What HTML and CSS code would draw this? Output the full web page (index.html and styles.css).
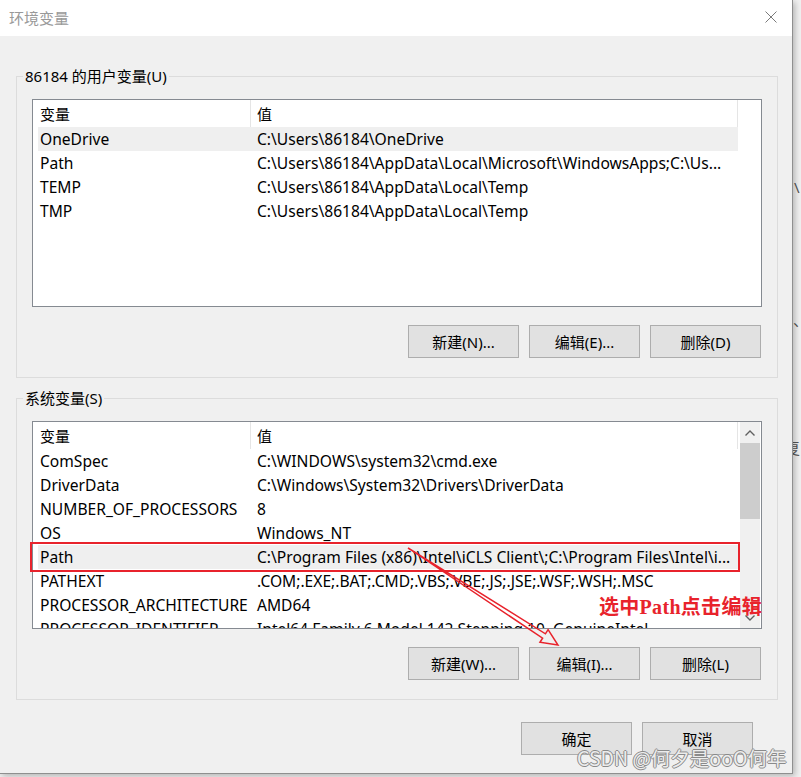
FILE: index.html
```html
<!DOCTYPE html>
<html lang="zh-CN">

<head>
    <meta charset="UTF-8">
    <title>环境变量</title>
    <link rel="stylesheet" href="styles.css">
</head>

<body>
    <div class="desktop">
        <!-- window behind the dialog, only its edges show -->
        <div class="back-window">
            <div class="back-labels">
                <span class="back-label first">\</span>
                <span class="back-label second">系、</span>
                <span class="back-label third">复</span>
            </div>
            <div class="back-buttons">
                <span class="back-btn">确定</span>
                <span class="back-btn">应用(A)</span>
            </div>
        </div>

        <div class="dialog">
            <div class="titlebar">
                <span class="title">环境变量</span>
                <svg class="close" width="12" height="12" viewBox="0 0 12 12">
                    <path d="M0.5 0.5 L11.5 11.5 M11.5 0.5 L0.5 11.5" stroke="#7a7a7a" stroke-width="1" fill="none" />
                </svg>
            </div>

            <div class="dialog-body">
                <fieldset class="group">
                    <legend>86184 的用户变量(U)</legend>
                    <div class="list">
                        <div class="table">
                            <div class="row head"><span>变量</span><span>值</span></div>
                            <div class="row selected"><span>OneDrive</span><span>C:\Users\86184\OneDrive</span></div>
                            <div class="row"><span>Path</span><span>C:\Users\86184\AppData\Local\Microsoft\WindowsApps;C:\Us...</span></div>
                            <div class="row"><span>TEMP</span><span>C:\Users\86184\AppData\Local\Temp</span></div>
                            <div class="row"><span>TMP</span><span>C:\Users\86184\AppData\Local\Temp</span></div>
                        </div>
                    </div>
                    <div class="buttons">
                        <button class="btn">新建(N)...</button>
                        <button class="btn">编辑(E)...</button>
                        <button class="btn">删除(D)</button>
                    </div>
                </fieldset>

                <fieldset class="group system">
                    <legend>系统变量(S)</legend>
                    <div class="list">
                        <div class="table">
                            <div class="row head"><span>变量</span><span>值</span></div>
                            <div class="row"><span>ComSpec</span><span>C:\WINDOWS\system32\cmd.exe</span></div>
                            <div class="row"><span>DriverData</span><span>C:\Windows\System32\Drivers\DriverData</span></div>
                            <div class="row"><span>NUMBER_OF_PROCESSORS</span><span>8</span></div>
                            <div class="row"><span>OS</span><span>Windows_NT</span></div>
                            <div class="row selected"><span>Path</span><span>C:\Program Files (x86)\Intel\iCLS Client\;C:\Program Files\Intel\i...</span></div>
                            <div class="row"><span>PATHEXT</span><span>.COM;.EXE;.BAT;.CMD;.VBS;.VBE;.JS;.JSE;.WSF;.WSH;.MSC</span></div>
                            <div class="row"><span>PROCESSOR_ARCHITECTURE</span><span>AMD64</span></div>
                            <div class="row"><span>PROCESSOR_IDENTIFIER</span><span>Intel64 Family 6 Model 142 Stepping 10, GenuineIntel</span></div>
                        </div>
                        <div class="scrollbar">
                            <div class="sb-arrow">
                                <svg width="10" height="6" viewBox="0 0 10 6"><path d="M0.5 5.5 L5 1 L9.5 5.5" stroke="#606060" stroke-width="1.4" fill="none" /></svg>
                            </div>
                            <div class="sb-thumb"></div>
                            <div class="sb-track"></div>
                            <div class="sb-arrow">
                                <svg width="10" height="6" viewBox="0 0 10 6"><path d="M0.5 0.5 L5 5 L9.5 0.5" stroke="#606060" stroke-width="1.4" fill="none" /></svg>
                            </div>
                        </div>
                    </div>
                    <div class="buttons">
                        <button class="btn">新建(W)...</button>
                        <button class="btn">编辑(I)...</button>
                        <button class="btn">删除(L)</button>
                    </div>
                </fieldset>

                <div class="footer">
                    <button class="btn">确定</button>
                    <button class="btn">取消</button>
                </div>
            </div>

            <!-- red annotations drawn over the screenshot -->
            <div class="mark-box"></div>
            <svg class="arrow" width="793" height="774" viewBox="0 0 793 774">
                <polygon points="0,0 162,-2.6 162,-7.5 178.6,0 162,7.5 162,2.6"
                    transform="translate(408 548) rotate(32.9)"
                    fill="none" stroke="#e8232c" stroke-width="1.5" stroke-linejoin="miter" />
            </svg>
            <div class="note">选中Path点击编辑</div>
            <div class="watermark">CSDN @何夕是ooO何年</div>
        </div>
    </div>
</body>

</html>
```

FILE: styles.css
```css
body {
    margin: 0;
    background: #f0f0f0;
    font-family: "Noto Sans", "Noto Sans CJK SC", sans-serif;
    font-size: 15px;
    color: #000;
}

.desktop {
    position: relative;
    width: 801px;
    height: 777px;
    overflow: hidden;
    background: #f0f0f0;
}

/* Background window */
.back-window {
    position: absolute;
    top: 0;
    left: 0;
    width: 801px;
    height: 777px;
    background: #f0f0f0;
}

.back-labels {
    display: flex;
    flex-direction: column;
    align-items: flex-start;
    color: #555;
    line-height: 20px;
}

.back-label.first {
    margin: 177px 0 0 794px;
}

.back-label.second {
    margin: 113px 0 0 778px;
}

.back-label.third {
    margin: 108px 0 0 785px;
}

.back-buttons {
    display: flex;
    gap: 10px;
    margin: 215px 0 0 39px;
}

.back-btn {
    width: 109px;
    height: 30px;
    line-height: 34px;
    text-align: center;
    background: #e1e1e1;
    border: 1px solid #adadad;
    color: #222;
}

/* Dialog */
.dialog {
    position: absolute;
    top: 0;
    left: 0;
    width: 792px;
    height: 773px;
    background: #f0f0f0;
    border-right: 1px solid #8f8f8f;
    border-bottom: 1px solid #8f8f8f;
    box-shadow: 2px 2px 6px rgba(0, 0, 0, 0.25);
}

.titlebar {
    display: flex;
    align-items: center;
    justify-content: space-between;
    height: 36px;
    padding: 0 15px 0 9px;
    box-sizing: border-box;
    background: #fff;
}

.title {
    color: #999;
    font-size: 15px;
    margin-top: -2px;
}

.close {
    margin-top: -2px;
}

.dialog-body {
    display: flex;
    flex-direction: column;
}

.group {
    width: 762px;
    box-sizing: border-box;
    margin: 30px 0 0 16px;
    padding: 13px 15px 19px;
    border: 1px solid #dcdcdc;
    min-width: 0;
}

.group.system {
    margin-top: 10px;
}

.group legend {
    margin-left: -9px;
    padding: 0 2px;
    line-height: 20px;
    height: 20px;
}

.list {
    display: flex;
    height: 208px;
    box-sizing: border-box;
    border: 1px solid #858a91;
    background: #fff;
    overflow: hidden;
}

.table {
    width: 706px;
    flex: none;
}

.row {
    display: grid;
    grid-template-columns: 213px 487px;
    width: 700px;
    margin-left: 5px;
    height: 24px;
    line-height: 24px;
    font-size: 15.6px;
}

.row span {
    white-space: nowrap;
    overflow: hidden;
    padding-left: 2px;
}

.row span + span {
    padding-left: 6px;
}

.row.head {
    height: 27px;
    line-height: 25px;
    font-size: 15px;
}

.row.head span {
    padding-top: 2px;
    border-right: 1px solid #e5e5e5;
}

.row.selected {
    background: #efefef;
}

.scrollbar {
    display: flex;
    flex-direction: column;
    width: 20px;
    margin-left: 1px;
    background: #f0f0f0;
}

.sb-arrow {
    display: flex;
    align-items: center;
    justify-content: center;
    height: 21px;
    flex: none;
}

.sb-thumb {
    height: 76px;
    background: #cdcdcd;
    flex: none;
}

.sb-track {
    flex: 1;
}

.buttons {
    display: flex;
    justify-content: flex-end;
    gap: 10px;
    margin: 18px 1px 0 0;
}

.btn {
    width: 111px;
    height: 33px;
    padding: 0;
    background: #e1e1e1;
    border: 1px solid #adadad;
    font-family: inherit;
    font-size: 15px;
    color: #000;
}

.footer {
    display: flex;
    justify-content: flex-end;
    gap: 10px;
    margin-top: 22px;
    padding-right: 39px;
}

/* Annotations */
.mark-box {
    position: absolute;
    left: 30px;
    top: 542px;
    width: 706px;
    height: 26px;
    border: 2px solid #e8232c;
}

.arrow {
    position: absolute;
    left: 0;
    top: 0;
    pointer-events: none;
}

.note {
    position: absolute;
    left: 599px;
    top: 595px;
    font-family: "Liberation Serif", "Noto Sans CJK SC", serif;
    font-weight: bold;
    font-size: 20px;
    line-height: 24px;
    letter-spacing: 0.3px;
    color: #e8232c;
    white-space: nowrap;
}

.watermark {
    position: absolute;
    left: 577px;
    top: 744px;
    font-family: "Noto Sans CJK SC", sans-serif;
    font-size: 19.5px;
    line-height: 28px;
    color: #ececec;
    text-shadow: 1px 0 0 #8a8a8a, -1px 0 0 #8a8a8a, 0 1px 0 #8a8a8a, 0 -1px 0 #8a8a8a;
    white-space: nowrap;
}
```
